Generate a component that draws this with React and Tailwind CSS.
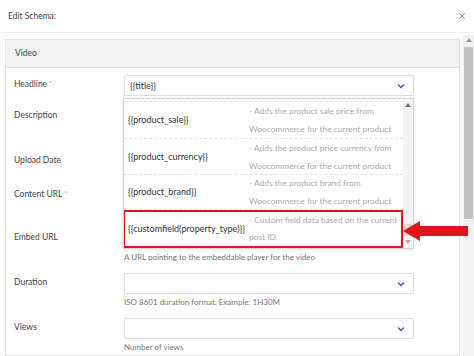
import { X } from 'lucide-react';

const Chevron = () => (
  <svg width="8" height="6" viewBox="0 0 8 6" className="text-[#6f3fc9]">
    <polyline points="1,1.5 4,4.5 7,1.5" fill="none" stroke="currentColor" strokeWidth="1.4" />
  </svg>
);

const SelectBox = ({ value }) => (
  <div className="h-[21px] w-[290px] bg-white border border-[#dedede] rounded-[2px] flex items-center justify-between pl-[5px] pr-[8px] text-[#333] text-[9px]">
    <span>{value}</span>
    <Chevron />
  </div>
);

const Row = ({ label, required, value, help, height }) => (
  <div className="flex" style={{ height }}>
    <div className="w-[110px] h-[19px] flex items-center text-[#444] text-[8.5px]">
      {label}
      {required && <span className="text-[#c33] ml-[2px] text-[6px] -mt-[4px]">*</span>}
    </div>
    <div>
      <SelectBox value={value} />
      {help && <div className="text-[#777] mt-[2px] leading-[12px] text-[8px] whitespace-nowrap">{help}</div>}
    </div>
  </div>
);

const options = [
  { code: '{{product_sale}}', desc: ['- Adds the product sale price from', 'Woocommerce for the current product'], h: 'h-[38px]' },
  { code: '{{product_currency}}', desc: ['- Adds the product price currency from', 'Woocommerce for the current product'], h: 'h-[36px]' },
  { code: '{{product_brand}}', desc: ['- Adds the product brand from', 'Woocommerce for the current product'], h: 'h-[35px]' },
];

const Dropdown = () => (
  <div className="absolute left-[117px] top-[30px] w-[291px] h-[151px] bg-white border border-[#d6d6d6] shadow-[0_1px_3px_rgba(0,0,0,0.12)] flex overflow-hidden">
    <div className="flex-1 flex flex-col">
      <div className="h-[5px] border-b border-dashed border-[#e2e2e2]" />
      {options.map((o) => (
        <div key={o.code} className={`${o.h} flex items-center border-b border-dashed border-[#e2e2e2]`}>
          <div className="w-[125px] shrink-0 pl-[4px] text-[#333] text-[9px]">{o.code}</div>
          <div className="text-[#aaa] leading-[18px] text-[8.4px] whitespace-nowrap">
            {o.desc.map((d) => <div key={d}>{d}</div>)}
          </div>
        </div>
      ))}
      <div className="flex-1 flex items-center border-2 border-[#e0151b] -ml-px">
        <div className="w-[124px] shrink-0 pl-[3px] text-[#333] text-[9px] whitespace-nowrap">{'{{customfield(property_type)}}'}</div>
        <div className="text-[#aaa] leading-[17px] text-[8.4px] whitespace-nowrap">
          <div>- Custom field data based on the current</div>
          <div>post ID.</div>
        </div>
      </div>
    </div>
    <div className="w-[10px] bg-[#f3f3f3] flex flex-col items-center justify-between py-[4px]">
      <svg width="6" height="4" viewBox="0 0 6 4"><polygon points="0,4 3,0 6,4" fill="#777" /></svg>
      <div className="flex-1" />
      <div className="w-[8px] h-[12px] bg-[#d9d9d9] mb-[4px]" />
      <svg width="6" height="4" viewBox="0 0 6 4"><polygon points="0,0 6,0 3,4" fill="#aaa" /></svg>
    </div>
  </div>
);

export default function App() {
  return (
    <div className="w-[474px] h-[356px] overflow-hidden bg-white relative text-[9px] flex flex-col" style={{ fontFamily: 'Lato, "Open Sans", sans-serif' }}>
      <div className="h-[33px] shrink-0 flex items-center justify-between pl-[8px] pr-[7px] border-b border-[#f0f0f0] text-[#444] text-[8.5px]">
        <span>Edit Schema:</span>
        <X size={10} strokeWidth={1.6} className="text-[#666]" />
      </div>
      <div className="flex flex-1 min-h-0">
        <div className="flex-1 pl-[5px] pr-[3px] pt-[6px] bg-[#fcfcfc]">
          <div className="border border-[#e4e4e4] bg-white h-full">
            <div className="h-[28px] bg-[#f2f2f2] border-b border-[#e4e4e4] flex items-center pl-[9px] text-[#444] text-[8.5px]">
              Video
            </div>
            <div className="relative pl-[8px] pt-[7px]">
              <Row label="Headline" required value="{{title}}" height="31px" />
              <Row label="Description" height="45px" />
              <Row label="Upload Date" height="34px" />
              <Row label="Content URL" required height="43px" />
              <Row label="Embed URL" help="A URL pointing to the embeddable player for the video" height="45px" />
              <Row label="Duration" help="ISO 8601 duration format. Example: 1H30M" height="45px" />
              <Row label="Views" help="Number of views" height="45px" />
              <Dropdown />
            </div>
          </div>
        </div>
        <div className="w-[11px] shrink-0 bg-[#f1f1f1] flex flex-col items-center pt-[3px] mt-[2px]">
          <svg width="6" height="4" viewBox="0 0 6 4"><polygon points="0,4 3,0 6,4" fill="#999" /></svg>
          <div className="w-[9px] h-[172px] bg-[#c1c1c1] mt-[5px]" />
        </div>
      </div>
      <svg className="absolute left-[402px] top-[220px]" width="70" height="22" viewBox="0 0 70 22">
        <polygon points="1,11 18,1 18,6 66,6 66,16 18,16 18,21" fill="#e0151b" />
      </svg>
    </div>
  );
}
